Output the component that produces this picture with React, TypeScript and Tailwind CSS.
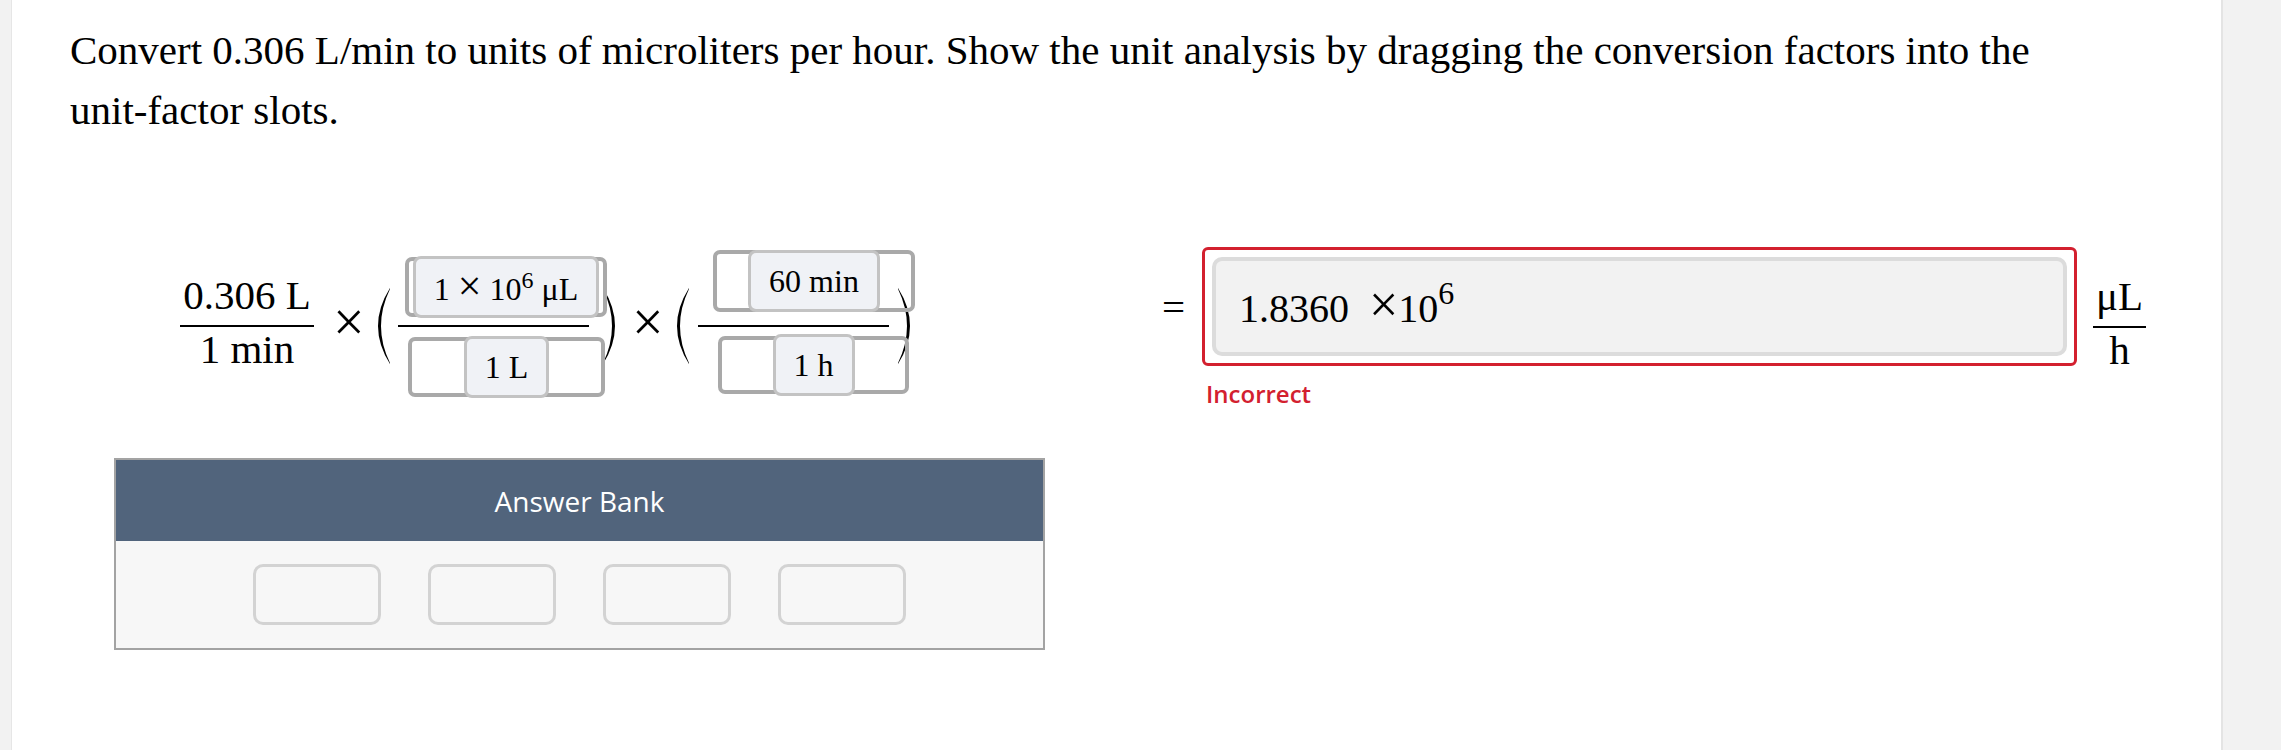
import React from "react";

function Paren({ side, className = "" }: { side: "l" | "r"; className?: string }) {
  const d =
    side === "l"
      ? "M12 0 Q-12 38 12 76 L12 75 Q-6 38 12 1 Z"
      : "M0 0 Q24 38 0 76 L0 75 Q18 38 0 1 Z";
  return (
    <svg
      width="12"
      height="76"
      viewBox="0 0 12 76"
      className={"shrink-0 overflow-visible " + className}
    >
      <path d={d} fill="#000" />
    </svg>
  );
}

function TextFrac({
  num,
  den,
  w,
  className = "",
}: {
  num: React.ReactNode;
  den: React.ReactNode;
  w: string;
  className?: string;
}) {
  return (
    <div className={"flex shrink-0 flex-col " + w + " " + className}>
      <div className="flex h-[70px] items-end justify-center whitespace-nowrap pb-[8px] leading-[44px]">
        {num}
      </div>
      <div className="h-[2px] bg-black" />
      <div className="flex h-[70px] items-start justify-center whitespace-nowrap leading-[44px]">
        {den}
      </div>
    </div>
  );
}

function Card({ children }: { children: React.ReactNode }) {
  return (
    <div className="flex h-[62px] shrink-0 items-center whitespace-nowrap rounded-[8px] border-[3px] border-[#c3c3c3] bg-[#f0f2f6] px-[18px] text-[32px] leading-[36px]">
      <span>{children}</span>
    </div>
  );
}

function Slot({
  children,
  className = "",
}: {
  children: React.ReactNode;
  className?: string;
}) {
  return (
    <div
      className={
        "relative z-10 flex shrink-0 items-center justify-center rounded-[7px] border-[4px] border-[#a9a9a9] " +
        className
      }
    >
      {children}
    </div>
  );
}

function Times({ className = "" }: { className?: string }) {
  return (
    <span
      className={
        "relative -top-[4px] w-[23px] shrink-0 text-center text-[56px] leading-[44px] " + className
      }
    >
      ×
    </span>
  );
}

export default function App() {
  return (
    <div className="flex h-[750px] w-[2281px] overflow-hidden bg-white font-['Liberation_Serif',serif] text-[41px] text-black">
      <div className="w-[12px] shrink-0 border-r border-[#e6e6e6] bg-[#f2f2f2]" />
      <main className="min-w-0 flex-1 pl-[58px] pr-[70px] pt-[20px]">
        <p className="text-[41px] leading-[60px]">
          Convert 0.306 L/min to units of microliters per hour. Show the unit analysis by
          dragging the conversion factors into the{" "}
          <span className="whitespace-nowrap">unit-factor</span> slots.
        </p>

        <div className="mt-[107px] flex items-start">
          <div className="ml-[110px] mt-[8px] flex items-center">
            <TextFrac num="0.306 L" den="1 min" w="w-[134px]" />
            <Times className="ml-[19px]" />
            <Paren side="l" className="ml-[22px]" />

            <div className="ml-[8px] flex w-[191px] shrink-0 flex-col">
              <div className="flex h-[70px] items-end pb-[8px]">
                <Slot className="ml-[7px] h-[60px] w-[202px]">
                  <Card>
                    1 <span className="text-[42px] leading-[36px]">×</span> 10<sup>6</sup> μL
                  </Card>
                </Slot>
              </div>
              <div className="h-[2px] w-[191px] bg-black" />
              <div className="flex h-[70px] items-start pt-[10px]">
                <Slot className="ml-[10px] h-[60px] w-[197px]">
                  <Card>1 L</Card>
                </Slot>
              </div>
            </div>

            <Paren side="r" className="ml-[14px]" />
            <Times className="ml-[17px]" />
            <Paren side="l" className="ml-[22px]" />

            <div className="ml-[9px] flex w-[191px] shrink-0 flex-col">
              <div className="flex h-[70px] items-end pb-[13px]">
                <Slot className="ml-[15px] h-[62px] w-[202px]">
                  <Card>60 min</Card>
                </Slot>
              </div>
              <div className="h-[2px] w-[191px] bg-black" />
              <div className="flex h-[70px] items-start pt-[9px]">
                <Slot className="ml-[20px] h-[58px] w-[191px]">
                  <Card>1 h</Card>
                </Slot>
              </div>
            </div>

            <Paren side="r" className="ml-[9px]" />
          </div>

          <div className="ml-[251px] flex h-[119px] w-[25px] shrink-0 items-center justify-center leading-[44px]">
            =
          </div>

          <div className="ml-[16px] flex shrink-0 flex-col">
            <div className="h-[119px] w-[875px] rounded-[6px] border-[3px] border-[#d3202f] p-[7px]">
              <div className="flex h-full items-center whitespace-nowrap rounded-[10px] border-[4px] border-[#dcdcdc] bg-[#f2f2f2] pl-[23px] text-[40px] leading-[44px]">
                <span>
                  1.8360&nbsp; <span className="text-[52px] leading-[44px]">×</span>10
                  <sup className="top-[-18px] text-[32px]">6</sup>
                </span>
              </div>
            </div>
            <div className="ml-[4px] mt-[12px] font-['Open_Sans',sans-serif] text-[24px] font-semibold leading-[32px] text-[#d3202f]">
              Incorrect
            </div>
          </div>

          <TextFrac num="μL" den="h" w="w-[53px]" className="ml-[16px] mt-[9px]" />
        </div>

        <div className="ml-[44px] mt-[48px] w-[931px] border-2 border-[#a3a3a3]">
          <div className="flex h-[81px] items-center justify-center bg-[#51647c] font-['Open_Sans',sans-serif] text-[28px] text-white">
            Answer Bank
          </div>
          <div className="flex h-[107px] items-center justify-center gap-[47px] bg-[#f7f7f7]">
            {[0, 1, 2, 3].map((i) => (
              <div
                key={i}
                className="h-[61px] w-[128px] rounded-[10px] border-[3px] border-[#d3d3d3]"
              />
            ))}
          </div>
        </div>
      </main>
      <div className="w-[60px] shrink-0 border-l-2 border-[#e4e4e4] bg-[#f2f2f2]" />
    </div>
  );
}
